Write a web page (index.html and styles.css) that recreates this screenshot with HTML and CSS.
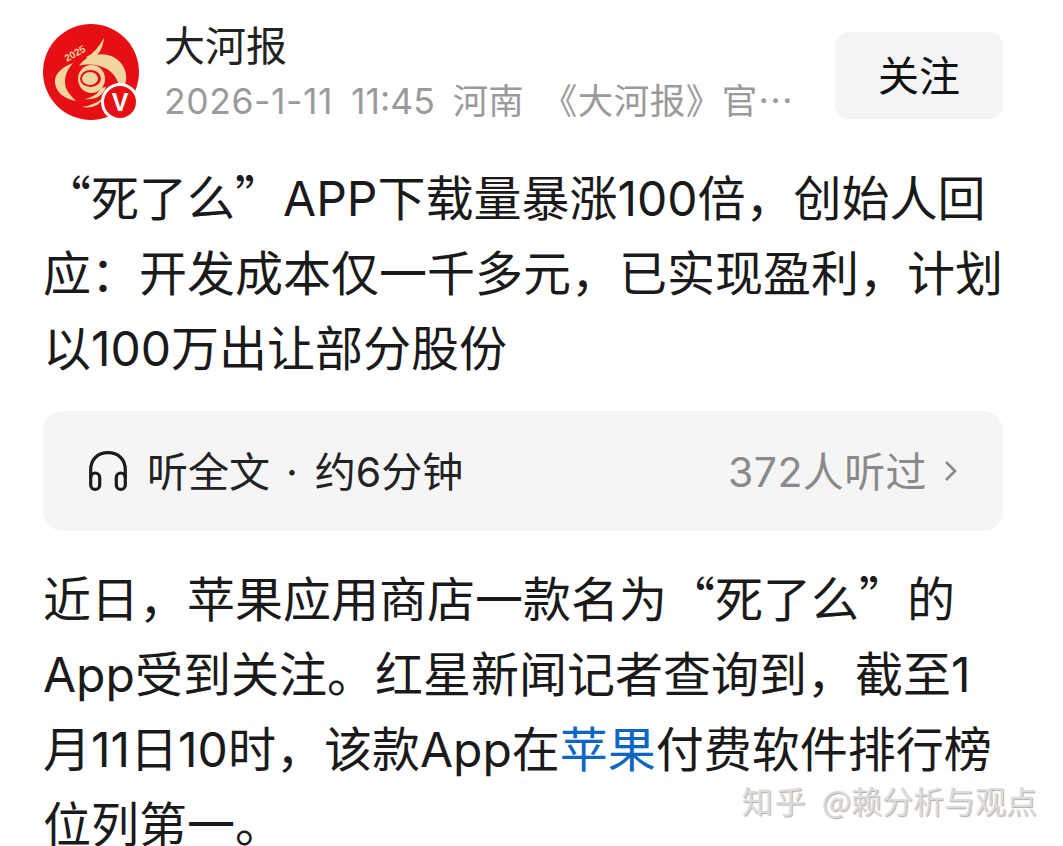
FILE: index.html
```html
<!DOCTYPE html>
<html lang="zh-CN">
<head>
    <meta charset="UTF-8">
    <meta name="viewport" content="width=device-width, initial-scale=1.0">
    <title>大河报</title>
    <link rel="stylesheet" href="styles.css">
</head>
<body>
    <div class="page">
        <header class="author">
            <div class="avatar">
                <svg viewBox="0 0 96 96" width="96" height="96">
                    <circle cx="48" cy="48" r="48" fill="#e60f14"/>
                    <text class="avatar-year" x="24" y="38" transform="rotate(-30 24 38)">2025</text>
                    <path d="M43 33C50 30 55 24 61 14C60 24 56 32 47 35Z" fill="#f0d5a0"/>
                    <path d="M30 39C17 44 11 51 12 59C13 68 21 75 33 77C26 70 22 65 22 58C22 50 25 45 30 39Z" fill="#f0d5a0"/>
                    <path d="M36 42C46 27 70 26 80 42C85 51 84 60 78 68C76 58 72 50 64 45C56 41 46 39 36 42Z" fill="#f0d5a0"/>
                    <ellipse cx="48.5" cy="55" rx="13.5" ry="14" fill="#f0d5a0"/>
                    <ellipse cx="47.5" cy="54.5" rx="10.5" ry="8.5" fill="#e60f14"/>
                    <ellipse cx="47" cy="54.5" rx="8" ry="6.5" fill="#f0d5a0"/>
                    <path d="M58 64C56 69 50 73 42 75C50 76 60 73 63 63Z" fill="#f0d5a0"/>
                    <path d="M39 83C46 82 54 79 60 74C58 80 50 85 39 83Z" fill="#f0d5a0"/>
                </svg>
                <span class="badge">V</span>
            </div>
            <div class="author-info">
                <div class="author-name">大河报</div>
                <div class="author-meta"><span class="latin meta-date">2026-1-11</span><span class="gap"></span><span class="latin">11:45</span><span class="gap"></span>河南<span class="gap"></span><span class="meta-source">《大河报》官…</span></div>
            </div>
            <button class="follow">关注</button>
        </header>

        <h1 class="title">“死了么”<span class="latin">APP</span>下载量暴涨<span class="latin">100</span>倍，创始人回应：开发成本仅一千多元，已实现盈利，计划以<span class="latin">100</span>万出让部分股份</h1>

        <div class="listen">
            <svg class="listen-icon" viewBox="0 0 38 40" width="38" height="40" fill="none" stroke="#1a1a1a" stroke-width="3.2">
                <path d="M1.7 27V19C1.7 8 9 1.7 19 1.7S36.3 8 36.3 19V27"/>
                <rect x="1.7" y="22" width="9" height="16.4" rx="4.5"/>
                <rect x="27.3" y="22" width="9" height="16.4" rx="4.5"/>
            </svg>
            <span class="listen-label">听全文<span class="latin listen-dot">·</span>约<span class="latin">6</span>分钟</span>
            <span class="listen-count"><span class="latin">372</span>人听过</span>
            <svg class="listen-arrow" viewBox="0 0 14 24" width="14" height="24" fill="none" stroke="#8a8a8a" stroke-width="2.6">
                <path d="M2 3L11 12L2 21"/>
            </svg>
        </div>

        <p class="content">近日，苹果应用商店一款名为“死了么”的<span class="latin">App</span>受到关注。红星新闻记者查询到，截至<span class="latin">1</span>月<span class="latin">11</span>日<span class="latin">10</span>时，该款<span class="latin">App</span>在<a href="#">苹果</a>付费软件排行榜位列第一。</p>
    </div>
    <div class="watermark"><span class="watermark-site">知乎</span>@赖分析与观点</div>
</body>
</html>
```

FILE: styles.css
```css
html, body { margin: 0; padding: 0; height: 846px; overflow: hidden; background-color: #fff; }
body {
    font-family: "Noto Sans CJK SC", "Noto Sans", sans-serif;
    color: #1a1a1a;
    position: relative;
}
.latin { font-family: Inter, "Noto Sans", sans-serif; line-height: 0; }
.page { padding: 24px 60px 0 43px; }

.author { display: flex; align-items: flex-start; }
.avatar { position: relative; width: 96px; height: 96px; flex-shrink: 0; }
.avatar svg { display: block; }
.avatar-year { font-size: 10px; font-weight: 700; fill: #f0d5a0; font-family: "Liberation Sans", sans-serif; }
.badge {
    position: absolute;
    right: 0;
    bottom: -1px;
    width: 38px;
    height: 38px;
    box-sizing: border-box;
    border: 3px solid #fff;
    border-radius: 50%;
    background-color: #e60f14;
    color: #fff;
    font: bold 25px/32px "Liberation Sans", sans-serif;
    text-align: center;
}
.author-info { flex: 1; min-width: 0; margin-left: 25px; margin-top: -4px; }
.author-name { font-size: 41px; line-height: 46px; color: #222; }
.author-meta { font-size: 35.5px; line-height: 46px; margin-top: 10px; color: #9a9a9a; white-space: nowrap; }
.meta-date { letter-spacing: 0.6px; }
.meta-source { letter-spacing: 0.5px; }
.gap { display: inline-block; width: 18px; }
.follow {
    width: 168px;
    height: 87px;
    margin-top: 8px;
    padding: 0 0 6px;
    border: 0;
    border-radius: 14px;
    background-color: #f3f4f6;
    color: #111;
    font-family: inherit;
    font-size: 41px;
    flex-shrink: 0;
}

.title { margin: 36px -6px 0 0; font-size: 48px; line-height: 75px; font-weight: 400; color: #1a1a1a; }

.listen {
    display: flex;
    align-items: center;
    height: 120px;
    margin-top: 28px;
    padding: 0 45px 0 46px;
    border-radius: 20px;
    background-color: #f5f5f6;
    font-size: 41px;
}
.listen-icon { flex-shrink: 0; margin-right: 20px; }
.listen-label { flex: 1; color: #222; padding-bottom: 4px; }
.listen-dot { margin: 0 17px 0 16px; }
.listen-count { color: #8a8a8a; padding-bottom: 4px; letter-spacing: 0.4px; }
.listen-arrow { margin-left: 17px; }

.content { margin: 28px -6px 0 0; font-size: 48px; line-height: 75px; color: #1a1a1a; }
.content a { color: #0c66c2; text-decoration: none; }

.watermark {
    position: absolute;
    top: 778px;
    right: 26px;
    font-size: 31px;
    line-height: 44px;
    color: #dcdcdc;
    text-shadow: 1px 1px 1px #b0b0b0;
    pointer-events: none;
}
.watermark-site { letter-spacing: 2px; margin-right: 14px; }
```
